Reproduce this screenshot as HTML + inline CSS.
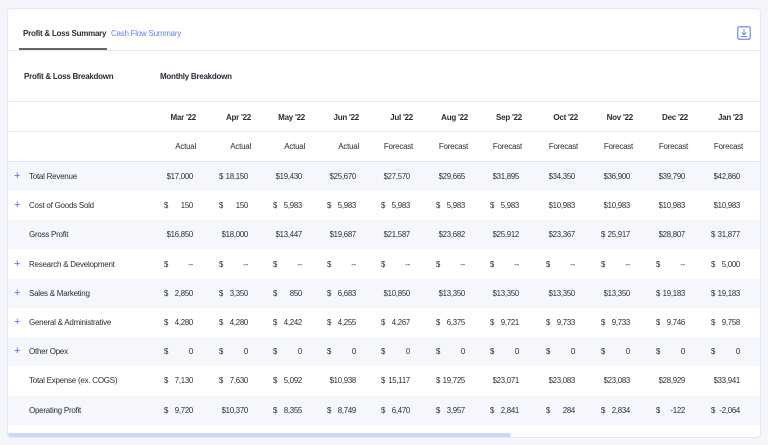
<!DOCTYPE html>
<html><head><meta charset="utf-8"><style>
*{margin:0;padding:0;box-sizing:border-box}
body{width:768px;height:445px;background:#f4f6fc;font-family:"Liberation Sans",sans-serif;color:#2a2d3a;position:relative;overflow:hidden;font-size:8px;letter-spacing:-0.25px}
.card{position:absolute;left:7px;top:8px;width:754px;height:430px;background:#fff;border:1px solid #e1e7f7;border-radius:4px;overflow:hidden}
.abs{position:absolute;white-space:nowrap}
.hl{position:absolute;left:0;width:754px;height:1px;background:#dfe6fa}
.row{position:absolute;left:0;width:754px;height:29px}
.row.s{background:#f5f7fd}
.lbl{position:absolute;left:21px;top:0;line-height:29px;white-space:nowrap}
.plus{position:absolute;left:6px;top:0;line-height:29px;color:#4a72e8;font-size:11px}
.c{position:absolute;top:0;line-height:29px;width:29px;white-space:nowrap;font-size:7.8px}
.c .d{position:absolute;left:0}
.c .n{position:absolute;right:0}
.h{position:absolute;text-align:right;width:60px;white-space:nowrap}
</style></head><body>
<div class="card">
<div class="abs" style="left:15px;top:20px;font-weight:bold">Profit &amp; Loss Summary</div>
<div class="abs" style="left:103px;top:20px;color:#5b86ee">Cash Flow Summary</div>
<div class="abs" style="left:11px;top:39px;width:88px;height:2px;background:#666"></div>
<div class="hl" style="top:41px"></div>
<svg class="abs" style="left:729px;top:17px" width="14" height="14" viewBox="0 0 14 14"><rect x="0.75" y="0.75" width="12.5" height="12.5" rx="1.5" fill="none" stroke="#6b8ff0" stroke-width="1.2"/><path d="M7 3.5v5M4.8 6.5L7 8.7 9.2 6.5M4 10.5h6" fill="none" stroke="#6b8ff0" stroke-width="1.1"/></svg>
<div class="abs" style="left:16px;top:63px;font-weight:bold">Profit &amp; Loss Breakdown</div>
<div class="abs" style="left:152px;top:63px;font-weight:bold">Monthly Breakdown</div>
<div class="hl" style="top:92px"></div>
<div class="hl" style="top:122px"></div>
<div class="hl" style="top:152px"></div>
<div id="hdr"></div>
<div id="rows"></div>
<div class="abs" style="left:0;top:424px;width:503px;height:4px;background:#cbd8f8;border-radius:2px"></div>
</div>
<script>
(function(){
var rights=[188,243,297,351,405,460,514,570,625,680,735];
var months=["Mar '22","Apr '22","May '22","Jun '22","Jul '22","Aug '22","Sep '22","Oct '22","Nov '22","Dec '22","Jan '23"];
var h='';
for(var i=0;i<11;i++){
h+='<div class="h" style="left:'+(rights[i]-60)+'px;top:104px;font-weight:bold">'+months[i]+'</div>';
h+='<div class="h" style="left:'+(rights[i]-60)+'px;top:133px">'+(i<4?'Actual':'Forecast')+'</div>';
}
document.getElementById('hdr').innerHTML=h;
var data=[
["Total Revenue",1,"$17,000|$ 18,150|$19,430|$25,670|$27,570|$29,665|$31,895|$34,350|$36,900|$39,790|$42,860"],
["Cost of Goods Sold",1,"$ 150|$ 150|$ 5,983|$ 5,983|$ 5,983|$ 5,983|$ 5,983|$10,983|$10,983|$10,983|$10,983"],
["Gross Profit",0,"$16,850|$18,000|$13,447|$19,687|$21,587|$23,682|$25,912|$23,367|$ 25,917|$28,807|$ 31,877"],
["Research & Development",1,"$ --|$ --|$ --|$ --|$ --|$ --|$ --|$ --|$ --|$ --|$ 5,000"],
["Sales & Marketing",1,"$ 2,850|$ 3,350|$ 850|$ 6,683|$10,850|$13,350|$13,350|$13,350|$13,350|$ 19,183|$ 19,183"],
["General & Administrative",1,"$ 4,280|$ 4,280|$ 4,242|$ 4,255|$ 4,267|$ 6,375|$ 9,721|$ 9,733|$ 9,733|$ 9,746|$ 9,758"],
["Other Opex",1,"$ 0|$ 0|$ 0|$ 0|$ 0|$ 0|$ 0|$ 0|$ 0|$ 0|$ 0"],
["Total Expense (ex. COGS)",0,"$ 7,130|$ 7,630|$ 5,092|$10,938|$ 15,117|$ 19,725|$23,071|$23,083|$23,083|$28,929|$33,941"],
["Operating Profit",0,"$ 9,720|$10,370|$ 8,355|$ 8,749|$ 6,470|$ 3,957|$ 2,841|$ 284|$ 2,834|$ -122|$ -2,064"]];
var r='';
for(var k=0;k<9;k++){
var ty=Math.round(153+k*29.2);
r+='<div class="row'+(k%2==0?' s':'')+'" style="top:'+ty+'px">';
if(data[k][1])r+='<div class="plus">+</div>';
r+='<div class="lbl">'+data[k][0].replace('&','&amp;')+'</div>';
var v=data[k][2].split('|');
for(var i=0;i<11;i++){
var s=v[i],c;
if(s.indexOf('$ ')==0){c='<span class="d">$</span><span class="n">'+s.slice(2)+'</span>';}
else c='<span class="n">'+s+'</span>';
r+='<div class="c" style="left:'+(rights[i]-32)+'px">'+c+'</div>';
}
r+='</div>';
}
document.getElementById('rows').innerHTML=r;
})();
</script>
</body></html>
